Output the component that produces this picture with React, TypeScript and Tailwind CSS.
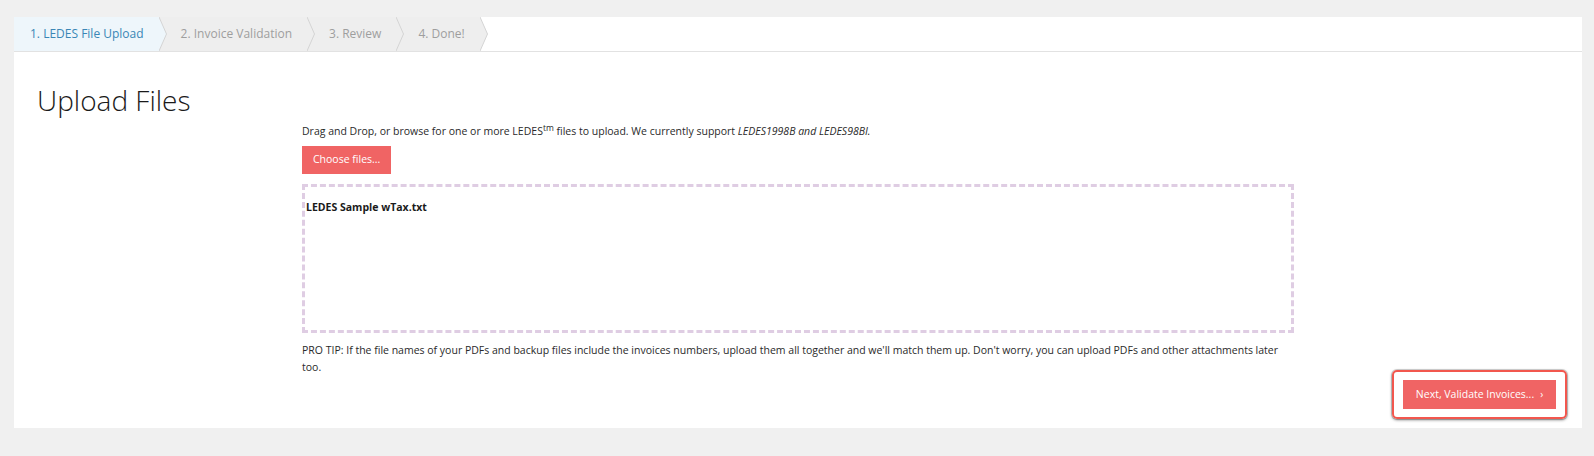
import React from "react";

type Tab = { label: string; active?: boolean };

const tabs: Tab[] = [
  { label: "1. LEDES File Upload", active: true },
  { label: "2. Invoice Validation" },
  { label: "3. Review" },
  { label: "4. Done!" },
];

function Arrow({ fill, next }: { fill: string; next: string }) {
  return (
    <svg width="8" height="34" viewBox="0 0 8 34" className="block shrink-0">
      <rect x="0" y="0" width="8" height="34" fill={next} />
      <polygon points="0,0 7.5,17 0,34" fill={fill} />
      <polyline points="0,0 7.5,17 0,34" fill="none" stroke="#d4d4d4" strokeWidth="1" />
    </svg>
  );
}

export default function App() {
  return (
    <div className="min-h-[456px] bg-[#f0f0f0] pt-[17px] pl-[14px] pr-[12px] font-['Open_Sans',sans-serif]">
      <div className="bg-white h-[411px] flex flex-col">
        <div className="flex h-[35px] border-b border-[#e2e2e2]">
          {tabs.map((t, i) => {
            const bg = t.active ? "#eef6fb" : "#eeeeee";
            const nextBg = i === tabs.length - 1 ? "#ffffff" : tabs[i + 1].active ? "#eef6fb" : "#eeeeee";
            return (
              <div key={t.label} className="flex h-[34px]">
                <div
                  className={
                    t.active
                      ? "flex items-center pl-[16px] pr-[15px] bg-[#eef6fb] text-[#3a86b6] text-[12px]"
                      : "flex items-center pl-[14px] pr-[15px] bg-[#eeeeee] text-[#9e9e9e] text-[12px]"
                  }
                >
                  {t.label}
                </div>
                <Arrow fill={bg} next={nextBg} />
              </div>
            );
          })}
        </div>

        <h1 className="pl-[23px] pt-[30px] text-[28px] leading-[37px] font-light text-[#1a1a1a]">Upload Files</h1>

        <div className="pl-[288px] pr-[288px] pt-[3px]">
          <p className="text-[10.5px] leading-[18px] text-[#2a2a2a]">
            Drag and Drop, or browse for one or more LEDES<sup className="text-[8.5px]">tm</sup> files to upload. We
            currently support <em>LEDES1998B and LEDES98BI.</em>
          </p>
          <button className="mt-[6px] h-[28px] px-[11px] bg-[#f06464] text-white text-[10.5px]">Choose files...</button>
          <div className="mt-[10px] h-[149px] border-[3px] border-dashed border-[#dfcde3] pl-[1px] pt-[13px]">
            <div className="text-[10.5px] font-bold text-[#1a1a1a] leading-[14px]">LEDES Sample wTax.txt</div>
          </div>
          <p className="mt-[9px] text-[10.5px] leading-[17px] text-[#2a2a2a]">
            PRO TIP: If the file names of your PDFs and backup files include the invoices numbers, upload them all
            together and we'll match them up. Don't worry, you can upload PDFs and other attachments later too.
          </p>
        </div>

        <div className="flex justify-end pr-[15px] -mt-[6px]">
          <div className="rounded-[5px] border-2 border-[#f2574e] shadow-[0_0_0_1px_rgba(0,0,0,0.15),0_1px_3px_rgba(0,0,0,0.5)] px-[9px] py-[8px]">
            <button className="h-[29px] w-[153px] bg-[#f06464] text-white text-[10.5px] flex items-center justify-center gap-[6px]">
              <span>Next, Validate Invoices...</span>
              <span className="text-[10px]">›</span>
            </button>
          </div>
        </div>
      </div>
    </div>
  );
}
